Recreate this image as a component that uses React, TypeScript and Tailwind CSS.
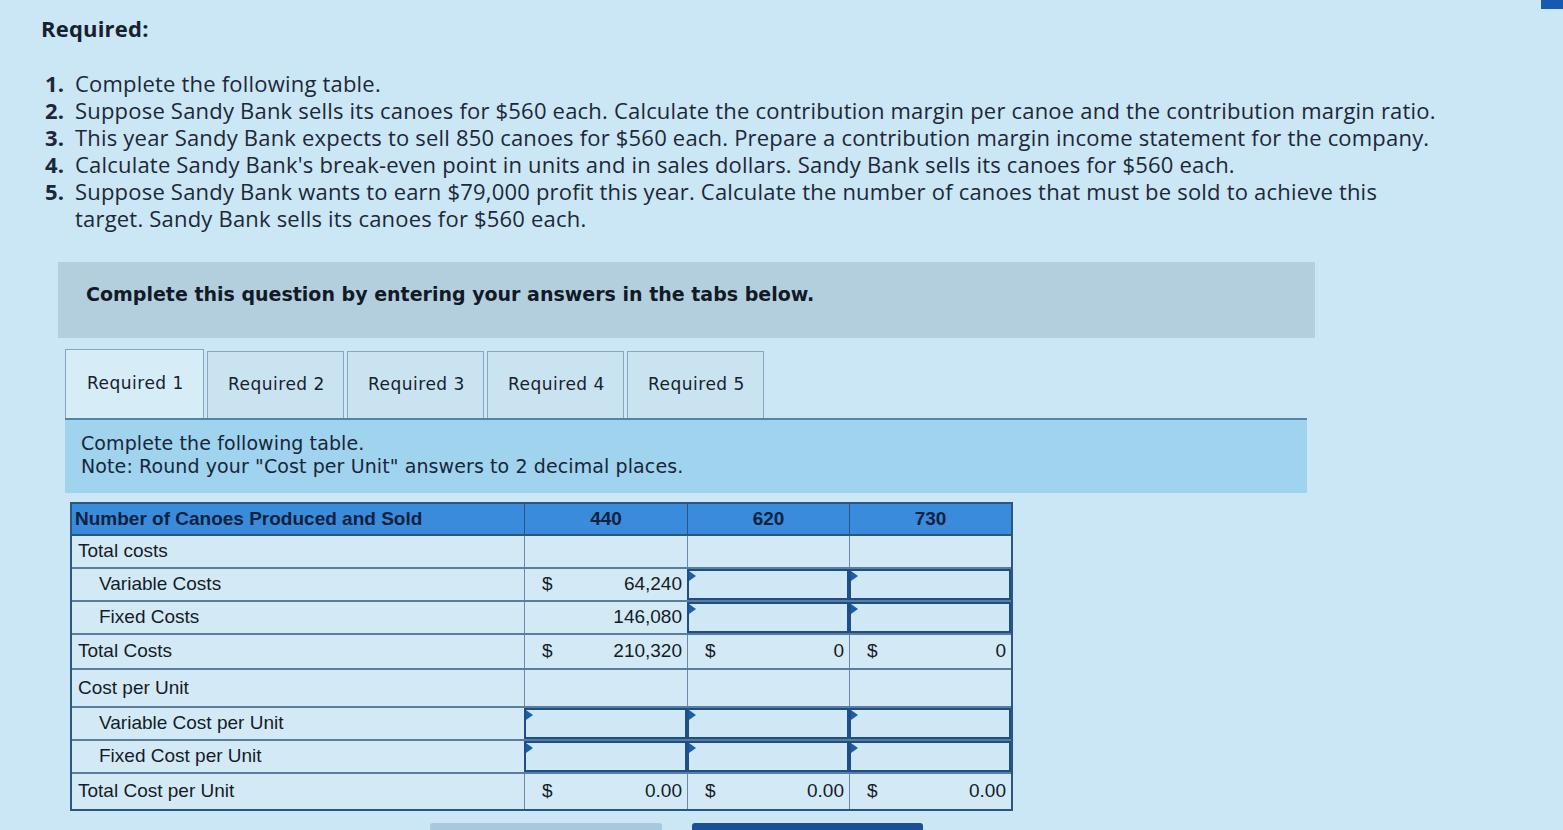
import React from 'react';

type Cell = { dollar?: boolean; value?: string; input?: boolean };

interface Row {
    label: string;
    indent: number;
    cells: Cell[];
    h: string;
}

const rows: Row[] = [
    { label: 'Total costs', indent: 0, h: 'h-[33px]', cells: [{}, {}, {}] },
    { label: 'Variable Costs', indent: 1, h: 'h-[33px]', cells: [{ dollar: true, value: '64,240' }, { input: true }, { input: true }] },
    { label: 'Fixed Costs', indent: 1, h: 'h-[33px]', cells: [{ value: '146,080' }, { input: true }, { input: true }] },
    { label: 'Total Costs', indent: 0, h: 'h-[35px]', cells: [{ dollar: true, value: '210,320' }, { dollar: true, value: '0' }, { dollar: true, value: '0' }] },
    { label: 'Cost per Unit', indent: 0, h: 'h-[38px]', cells: [{}, {}, {}] },
    { label: 'Variable Cost per Unit', indent: 1, h: 'h-[33px]', cells: [{ input: true }, { input: true }, { input: true }] },
    { label: 'Fixed Cost per Unit', indent: 1, h: 'h-[33px]', cells: [{ input: true }, { input: true }, { input: true }] },
    { label: 'Total Cost per Unit', indent: 0, h: 'h-[35px]', cells: [{ dollar: true, value: '0.00' }, { dollar: true, value: '0.00' }, { dollar: true, value: '0.00' }] },
];

const tasks = [
    'Complete the following table.',
    'Suppose Sandy Bank sells its canoes for $560 each. Calculate the contribution margin per canoe and the contribution margin ratio.',
    'This year Sandy Bank expects to sell 850 canoes for $560 each. Prepare a contribution margin income statement for the company.',
    "Calculate Sandy Bank's break-even point in units and in sales dollars. Sandy Bank sells its canoes for $560 each.",
    'Suppose Sandy Bank wants to earn $79,000 profit this year. Calculate the number of canoes that must be sold to achieve this target. Sandy Bank sells its canoes for $560 each.',
];

const tabs = ['Required 1', 'Required 2', 'Required 3', 'Required 4', 'Required 5'];

const DataCell: React.FC<{ cell: Cell }> = ({ cell }) => {
    if (cell.input) {
        return (
            <div className="relative h-full border-2 border-[#1d4f86] bg-[#d0e8f5]">
                <span className="absolute left-0 top-0 w-0 h-0 border-y-[5px] border-y-transparent border-l-[7px] border-l-[#1d5fa6]" />
            </div>
        );
    }
    return (
        <div className="h-full flex items-center justify-between pl-[17px] pr-[5px] border-l border-[#6b8aa8] bg-[#d3eaf6]">
            <span>{cell.dollar ? '$' : ''}</span>
            <span>{cell.value ?? ''}</span>
        </div>
    );
};

const App: React.FC = () => {
    return (
        <div className="w-[1563px] h-[830px] overflow-hidden bg-[#cbe6f4] text-[#17212e] relative">
            <div className="absolute right-0 top-0 w-[22px] h-[9px] bg-[#1559b0]" />

            <div className="pl-[41px] pt-[13px] font-['Open_Sans',sans-serif]">
                <h2 className="text-[22px] font-bold leading-[30px] tracking-[0.2px]">Required:</h2>
                <ol className="mt-[27px] pl-[4px] text-[22px] leading-[27px] tracking-[0.2px] text-[#1c2838]">
                    {tasks.map((t, i) => (
                        <li key={i} className="flex">
                            <span className="w-[30px] shrink-0 font-bold">{i + 1}.</span>
                            <span className="w-[1375px]">{t}</span>
                        </li>
                    ))}
                </ol>
            </div>

            <div className="ml-[58px] mt-[30px] w-[1257px] h-[76px] bg-[#b3cfde] pl-[28px] pt-[18px]">
                <p className="font-['DejaVu_Sans',sans-serif] font-bold text-[19px] tracking-[0px] text-[#111a26]">
                    Complete this question by entering your answers in the tabs below.
                </p>
            </div>

            <div className="ml-[65px] mt-[11px] w-[1242px] font-['DejaVu_Sans',sans-serif]">
                <div className="flex gap-[3px] h-[69px] items-end">
                    {tabs.map((t, i) => (
                        <div
                            key={t}
                            className={
                                i === 0
                                    ? 'w-[139px] h-[69px] flex items-center pl-[21px] border border-b-0 border-[#8aa6bd] bg-[#d6ecf7] text-[17px] tracking-[0.5px]'
                                    : 'w-[137px] h-[67px] flex items-center pl-[20px] border border-b-0 border-[#8aa6bd] bg-[#c9e3f1] text-[17px] tracking-[0.5px]'
                            }
                        >
                            {t}
                        </div>
                    ))}
                </div>
                <div className="h-[75px] bg-[#9fd3ee] border-t-2 border-[#4d86aa] pl-[16px] pt-[12px] text-[19px] leading-[23px] tracking-[0.1px] text-[#18263a]">
                    <p>Complete the following table.</p>
                    <p>Note: Round your "Cost per Unit" answers to 2 decimal places.</p>
                </div>
            </div>

            <div className="ml-[70px] mt-[9px] w-[943px] border-2 border-[#2b5680] font-['Liberation_Sans',Arial,sans-serif] text-[19px] text-[#141c28]">
                <div className="grid grid-cols-[452px_163px_162px_162px] h-[32px] bg-[#3a8bdc] font-bold text-[#10223d] border-b-2 border-[#2b5680]">
                    <div className="flex items-center pl-[3px]">Number of Canoes Produced and Sold</div>
                    <div className="flex items-center justify-center border-l border-[#2b5680]">440</div>
                    <div className="flex items-center justify-center border-l border-[#2b5680]">620</div>
                    <div className="flex items-center justify-center border-l border-[#2b5680]">730</div>
                </div>
                {rows.map((r, i) => (
                    <div
                        key={r.label}
                        className={`grid grid-cols-[452px_163px_162px_162px] ${r.h} ${i < rows.length - 1 ? 'border-b-2 border-[#5a7d9e]' : ''}`}
                    >
                        <div className={`flex items-center bg-[#d3eaf6] ${r.indent ? 'pl-[27px]' : 'pl-[6px]'}`}>{r.label}</div>
                        {r.cells.map((c, j) => (
                            <DataCell key={j} cell={c} />
                        ))}
                    </div>
                ))}
            </div>

            <div className="ml-[430px] mt-[12px] flex gap-[30px]">
                <div className="w-[232px] h-[12px] rounded-t-[3px] bg-[#a7c9de]" />
                <div className="w-[231px] h-[12px] rounded-t-[3px] bg-[#1b4f96]" />
            </div>
        </div>
    );
};

export default App;
